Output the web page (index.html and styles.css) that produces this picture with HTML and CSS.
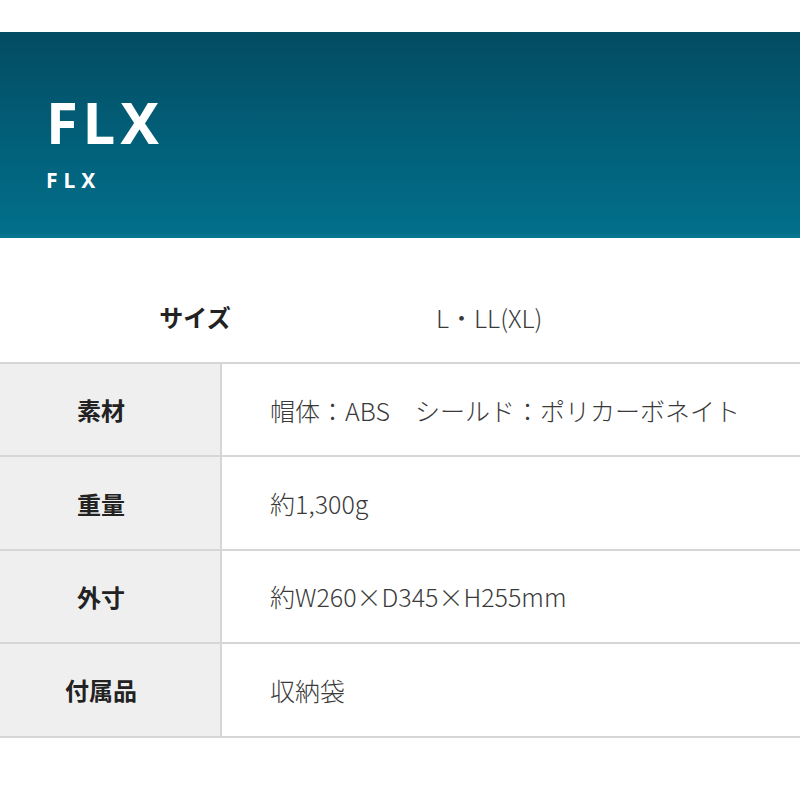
FILE: index.html
```html
<!DOCTYPE html>
<html lang="ja">
<head>
<meta charset="utf-8">
<title>FLX</title>
<link rel="stylesheet" href="styles.css">
</head>
<body>
<header class="hero">
  <h1 class="hero-title">FLX</h1>
  <p class="hero-sub">FLX</p>
</header>
<section class="spec">
  <div class="row row-size">
    <div class="label label-plain">サイズ</div>
    <div class="value">L・LL(XL)</div>
  </div>
  <div class="row">
    <div class="label">素材</div>
    <div class="value">帽体：ABS　シールド：ポリカーボネイト</div>
  </div>
  <div class="row">
    <div class="label">重量</div>
    <div class="value">約1,300g</div>
  </div>
  <div class="row">
    <div class="label">外寸</div>
    <div class="value">約W260×D345×H255mm</div>
  </div>
  <div class="row">
    <div class="label">付属品</div>
    <div class="value">収納袋</div>
  </div>
</section>
</body>
</html>
```

FILE: styles.css
```css
* { box-sizing: border-box; }
html, body { margin: 0; padding: 0; background: #fff; }
body {
  font-family: "Noto Sans CJK JP", "Noto Sans", sans-serif;
  color: #333;
}
.hero {
  margin-top: 32px;
  height: 206px;
  background: linear-gradient(to bottom, #034c62 0%, #02607a 55%, #026f8a 97%, #0a7893 100%);
  padding: 75px 0 0 46px;
  color: #fff;
}
.hero-title {
  margin: 0;
  font-family: "Noto Sans", sans-serif;
  font-weight: 700;
  font-size: 58px;
  line-height: 30px;
  letter-spacing: 5px;
}
.hero-sub {
  margin: 35px 0 0;
  font-family: "Noto Sans", sans-serif;
  font-weight: 700;
  font-size: 21px;
  line-height: 16px;
  letter-spacing: 6px;
}
.spec {
  margin-top: 33px;
}
.row {
  display: grid;
  grid-template-columns: 222px 1fr;
  height: 93.4px;
  border-bottom: 2px solid #d6d6d6;
}
.row-size {
  grid-template-columns: 390px 1fr;
  height: 93px;
}
.label {
  display: flex;
  align-items: center;
  justify-content: center;
  padding-right: 18px;
  background: #efefef;
  border-right: 2px solid #d6d6d6;
  font-weight: 700;
  font-size: 24px;
  color: #222;
}
.label-plain {
  background: transparent;
  border-right: none;
  padding-right: 0;
}
.value {
  display: flex;
  align-items: center;
  padding-left: 48px;
  font-size: 25px;
  font-weight: 300;
  color: #3a3a3a;
}
.row-size .value { padding-left: 46px; }
```
